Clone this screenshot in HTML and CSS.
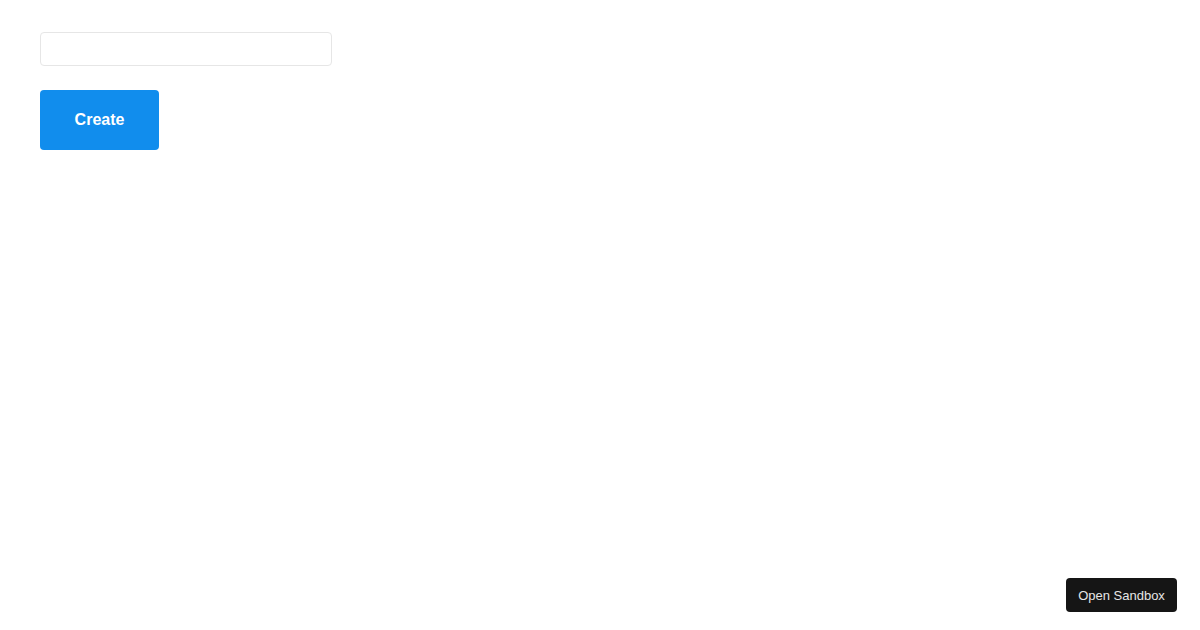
FILE: index.html
```html
<!DOCTYPE html>
<html>
<head>
<meta charset="utf-8">
<link rel="stylesheet" href="styles.css">
</head>
<body>
<div class="app">
  <input class="field" type="text">
  <button class="create">Create</button>
</div>
<a class="sandbox">Open Sandbox</a>
</body>
</html>
```
FILE: styles.css
```css
html, body { margin: 0; padding: 0; background: #fff; }
body { font-family: "Liberation Sans", Arial, sans-serif; }
.app {
  padding: 32px 40px;
  display: flex;
  flex-direction: column;
  align-items: flex-start;
  gap: 24px;
}
.field {
  box-sizing: border-box;
  width: 292px;
  height: 34px;
  border: 1px solid #e6e6e6;
  border-radius: 4px;
  margin: 0;
  padding: 0 8px;
  outline: none;
  background: #fff;
}
.create {
  box-sizing: border-box;
  width: 119px;
  height: 60px;
  border: none;
  border-radius: 4px;
  background: #118ded;
  color: #fff;
  font-family: "Liberation Sans", Arial, sans-serif;
  font-weight: bold;
  font-size: 16px;
  margin: 0;
  padding: 0;
}
.sandbox {
  position: fixed;
  right: 23px;
  bottom: 18px;
  width: 111px;
  height: 34px;
  box-sizing: border-box;
  display: flex;
  align-items: center;
  justify-content: center;
  background: #151515;
  color: #e6e6e6;
  border-radius: 4px;
  font-size: 13px;
  font-family: "Liberation Sans", Arial, sans-serif;
}
```
